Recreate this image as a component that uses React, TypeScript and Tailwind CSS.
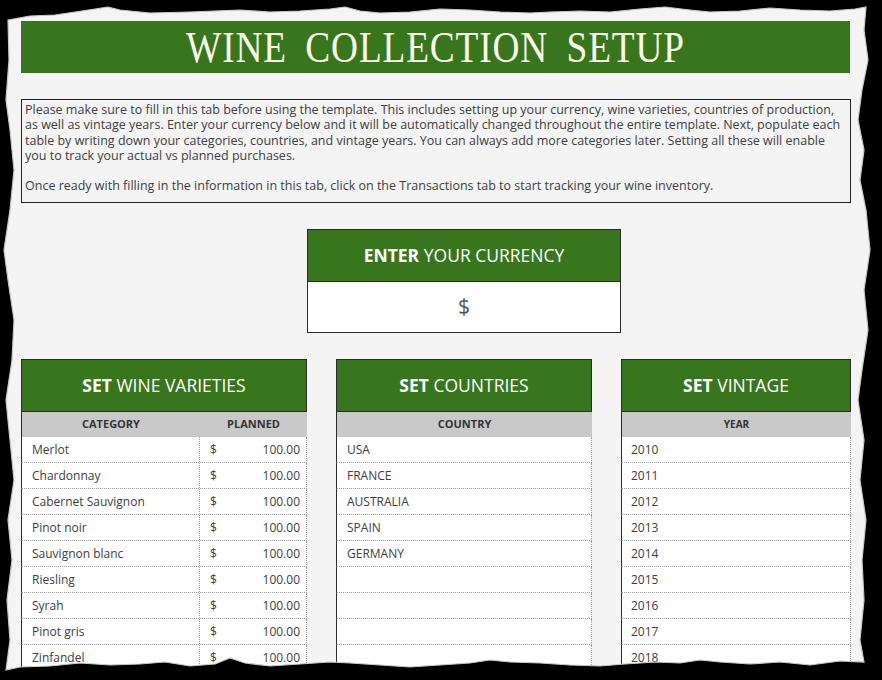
import React from 'react'

// ── Data ──────────────────────────────────────────────────────────────────────

const VARIETIES = [
  'Merlot',
  'Chardonnay',
  'Cabernet Sauvignon',
  'Pinot noir',
  'Sauvignon blanc',
  'Riesling',
  'Syrah',
  'Pinot gris',
  'Zinfandel',
  'Malbec',
]

const COUNTRIES = ['USA', 'FRANCE', 'AUSTRALIA', 'SPAIN', 'GERMANY', '', '', '', '', '']

const YEARS = ['2010', '2011', '2012', '2013', '2014', '2015', '2016', '2017', '2018', '2019']

const INTRO = [
  'Please make sure to fill in this tab before using the template. This includes setting up your currency, wine varieties, countries of production,',
  'as well as vintage years. Enter your currency below and it will be automatically changed throughout the entire template. Next, populate each',
  'table by writing down your categories, countries, and vintage years. You can always add more categories later. Setting all these will enable',
  'you to track your actual vs planned purchases.',
]

// torn paper outline (clockwise from top-left)
const EDGE = [
  [8, 20], [30, 16], [55, 15], [75, 12], [95, 9], [108, 7], [120, 10], [150, 13],
  [190, 12], [215, 11], [240, 10], [270, 12], [300, 11], [330, 9], [345, 7],
  [360, 11], [380, 13], [410, 12], [440, 9], [470, 10], [500, 12], [530, 13],
  [550, 12], [580, 11], [610, 12], [640, 9], [665, 7], [690, 10], [710, 12],
  [740, 11], [770, 8], [800, 10], [830, 11], [855, 9], [866, 7],
  [864, 30], [868, 60], [862, 90], [858, 120], [864, 150], [860, 180], [866, 210],
  [870, 250], [864, 290], [868, 330], [862, 370], [858, 400], [864, 440],
  [860, 480], [866, 520], [862, 560], [864, 600], [860, 640], [864, 662],
  [840, 661], [810, 665], [780, 662], [750, 664], [720, 662], [700, 660],
  [680, 663], [655, 662], [625, 664], [600, 666], [570, 665], [540, 663],
  [510, 662], [490, 660], [470, 663], [440, 665], [410, 667], [380, 665],
  [350, 663], [330, 662], [300, 664], [270, 666], [245, 663], [230, 658],
  [215, 664], [190, 666], [165, 662], [140, 664], [110, 665], [80, 663],
  [50, 666], [20, 667], [6, 670],
  [10, 640], [7, 600], [12, 560], [8, 520], [14, 480], [10, 440], [6, 400],
  [12, 360], [14, 320], [8, 280], [4, 250], [10, 210], [14, 170], [10, 130],
  [6, 100], [9, 60],
]

const edgePath = 'M' + EDGE.map(([x, y]) => `${x} ${y}`).join('L') + 'Z'

// ── Pieces ────────────────────────────────────────────────────────────────────

function CardHeader({ bold, rest }: { bold: string; rest: string }) {
  return (
    <div className="flex h-[53px] items-center justify-center border border-[#2b2b2b] bg-[#38761d] text-[17.5px] text-white">
      <span className="font-bold">{bold}</span>
      <span>&nbsp;{rest}</span>
    </div>
  )
}

function SubHeader({ children }: { children: React.ReactNode }) {
  return (
    <div className="flex h-[25px] border-l border-[#2b2b2b] bg-[#c9c9c9] text-[11px] font-bold text-[#333]">
      {children}
    </div>
  )
}

function Row({ children }: { children: React.ReactNode }) {
  return (
    <div className="flex h-[26px] items-center border-b border-l border-r border-b-[#9a9a9a] border-l-[#2b2b2b] border-r-[#9a9a9a] border-dotted bg-white text-[12px] text-[#404040] [border-left-style:solid]">
      {children}
    </div>
  )
}

// ── Component ─────────────────────────────────────────────────────────────────

export default function App() {
  return (
    <div className="relative h-[680px] w-[882px] overflow-hidden bg-[#f4f4f4] pl-[21px] pt-[21px] font-['Open_Sans',sans-serif]">
      {/* Title */}
      <div className="flex h-[52px] w-[829px] items-center justify-center bg-[#38761d]">
        <h1 className="scale-x-[0.83] font-['Liberation_Serif',serif] text-[45px] leading-none tracking-[1px] text-[#fdfbea] [word-spacing:10px]">
          WINE COLLECTION SETUP
        </h1>
      </div>

      {/* Instructions */}
      <div className="mt-[26px] h-[104px] w-[830px] border border-[#222] px-[3px] pt-[2px] text-[12.5px] leading-[15.3px] text-[#404040]">
        {INTRO.map((line) => (
          <p key={line} className="whitespace-nowrap">
            {line}
          </p>
        ))}
        <p className="mt-[15.3px] whitespace-nowrap">
          Once ready with filling in the information in this tab, click on the Transactions tab to start tracking your
          wine inventory.
        </p>
      </div>

      {/* Currency */}
      <div className="ml-[286px] mt-[26px] w-[314px] border border-[#2b2b2b]">
        <div className="flex h-[52px] items-center justify-center border-b border-[#2b2b2b] bg-[#38761d] text-[17.5px] text-white">
          <span className="font-bold">ENTER</span>
          <span>&nbsp;YOUR CURRENCY</span>
        </div>
        <div className="flex h-[50px] items-center justify-center bg-white text-[21px] text-[#555]">$</div>
      </div>

      {/* Tables */}
      <div className="mt-[26px] flex gap-[29px]">
        {/* Wine varieties */}
        <div className="w-[286px]">
          <CardHeader bold="SET" rest="WINE VARIETIES" />
          <SubHeader>
            <div className="flex w-[178px] items-center justify-center">CATEGORY</div>
            <div className="flex flex-1 items-center justify-center">PLANNED</div>
          </SubHeader>
          {VARIETIES.map((name) => (
            <Row key={name}>
              <div className="flex h-full w-[178px] items-center border-r border-dotted border-[#9a9a9a] pl-[10px]">
                {name}
              </div>
              <div className="flex flex-1 items-center justify-between pl-[10px] pr-[6px]">
                <span>$</span>
                <span>100.00</span>
              </div>
            </Row>
          ))}
        </div>

        {/* Countries */}
        <div className="w-[256px]">
          <CardHeader bold="SET" rest="COUNTRIES" />
          <SubHeader>
            <div className="flex flex-1 items-center justify-center">COUNTRY</div>
          </SubHeader>
          {COUNTRIES.map((c, i) => (
            <Row key={i}>
              <span className="pl-[10px]">{c}</span>
            </Row>
          ))}
        </div>

        {/* Vintage */}
        <div className="w-[230px]">
          <CardHeader bold="SET" rest="VINTAGE" />
          <SubHeader>
            <div className="flex flex-1 items-center justify-center text-[10px]">YEAR</div>
          </SubHeader>
          {YEARS.map((y) => (
            <Row key={y}>
              <span className="pl-[9px]">{y}</span>
            </Row>
          ))}
        </div>
      </div>

      {/* Torn paper edge */}
      <svg className="pointer-events-none absolute inset-0" width="882" height="680" viewBox="0 0 882 680">
        <path d={`M0 0H882V680H0Z${edgePath}`} fill="#000" fillRule="evenodd" />
        <path d={edgePath} fill="none" stroke="#c8c8c8" strokeWidth="1.2" />
      </svg>
    </div>
  )
}
